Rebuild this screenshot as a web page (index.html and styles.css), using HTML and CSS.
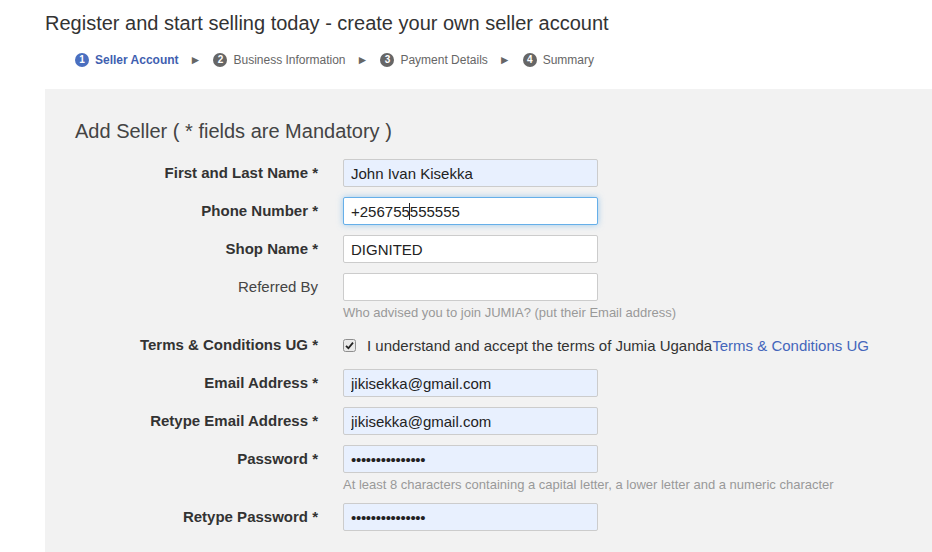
FILE: index.html
```html
<!DOCTYPE html>
<html lang="en">
<head>
    <meta charset="UTF-8">
    <meta name="viewport" content="width=device-width, initial-scale=1.0">
    <title>Register - Seller Account</title>
    <link rel="stylesheet" href="styles.css">
</head>
<body>
    <h1 class="page-title">Register and start selling today - create your own seller account</h1>
    <ul class="steps">
        <li class="step active"><span class="num">1</span>Seller Account</li>
        <li class="arrow">&#9658;</li>
        <li class="step"><span class="num">2</span>Business Information</li>
        <li class="arrow">&#9658;</li>
        <li class="step"><span class="num">3</span>Payment Details</li>
        <li class="arrow">&#9658;</li>
        <li class="step"><span class="num">4</span>Summary</li>
    </ul>

    <div class="panel">
        <h2 class="panel-title">Add Seller ( * fields are Mandatory )</h2>
        <form class="seller-form">
            <div class="form-row">
                <label class="req">First and Last Name *</label>
                <div class="field"><input type="text" class="filled" value="John Ivan Kisekka"></div>
            </div>
            <div class="form-row">
                <label class="req">Phone Number *</label>
                <div class="field caret-wrap">
                    <input type="text" class="focused" value="+256755555555">
                    <span class="caret"></span>
                </div>
            </div>
            <div class="form-row">
                <label class="req">Shop Name *</label>
                <div class="field"><input type="text" value="DIGNITED"></div>
            </div>
            <div class="form-row">
                <label>Referred By</label>
                <div class="field">
                    <input type="text" value="">
                    <p class="help">Who advised you to join JUMIA? (put their Email address)</p>
                </div>
            </div>
            <div class="form-row">
                <label class="req">Terms &amp; Conditions UG *</label>
                <div class="field terms">
                    <svg class="check" width="13" height="13" viewBox="0 0 13 13">
                        <rect x="0.5" y="0.5" width="12" height="12" rx="2" fill="#e9e9e9" stroke="#8f8f8f"/>
                        <path d="M3 6.8 L5.4 9.2 L10 3.6" fill="none" stroke="#222" stroke-width="1.8"/>
                    </svg>
                    <span>I understand and accept the terms of Jumia Uganda<a href="#">Terms &amp; Conditions UG</a></span>
                </div>
            </div>
            <div class="form-row">
                <label class="req">Email Address *</label>
                <div class="field"><input type="text" class="filled" value="jikisekka@gmail.com"></div>
            </div>
            <div class="form-row">
                <label class="req">Retype Email Address *</label>
                <div class="field"><input type="text" class="filled" value="jikisekka@gmail.com"></div>
            </div>
            <div class="form-row">
                <label class="req">Password *</label>
                <div class="field">
                    <input type="password" class="filled" value="aaaaaaaaaaaaaaa">
                    <p class="help">At least 8 characters containing a capital letter, a lower letter and a numeric character</p>
                </div>
            </div>
            <div class="form-row">
                <label class="req">Retype Password *</label>
                <div class="field"><input type="password" class="filled" value="aaaaaaaaaaaaaaa"></div>
            </div>
        </form>
    </div>
</body>
</html>
```

FILE: styles.css
```css
body {
    font-family: "Liberation Sans", Arial, sans-serif;
    background-color: #fff;
    color: #333;
    margin: 0;
    padding: 0 0 0 45px;
}

.page-title {
    font-size: 20px;
    font-weight: normal;
    line-height: 24px;
    color: #333;
    margin: 11px 0 0;
}

.steps {
    list-style: none;
    display: flex;
    align-items: center;
    margin: 15px 0 0 30px;
    padding: 0;
    height: 20px;
    font-size: 12px;
    color: #666;
}

.step {
    display: flex;
    align-items: center;
}

.step.active {
    color: #3f5fb0;
    font-weight: bold;
}

.num {
    display: inline-block;
    width: 14px;
    height: 14px;
    line-height: 14px;
    border-radius: 50%;
    background-color: #666;
    color: #fff;
    font-size: 10px;
    font-weight: bold;
    text-align: center;
    margin-right: 6px;
}

.step.active .num {
    background-color: #4a6fc0;
}

.arrow {
    font-size: 12px;
    color: #666;
    margin: 0 12px 0 11px;
}

.panel {
    background-color: #f2f2f2;
    margin-top: 19px;
    padding: 30px 30px 20px;
    min-height: 440px;
}

.panel-title {
    font-size: 20px;
    font-weight: normal;
    line-height: 24px;
    color: #444;
    margin: 0 0 16px;
}

.form-row {
    display: flex;
    align-items: flex-start;
    margin-bottom: 10px;
}

.form-row label {
    width: 243px;
    flex: none;
    text-align: right;
    font-size: 15px;
    line-height: 28px;
    color: #444;
    margin-right: 25px;
}

.form-row label.req {
    font-weight: bold;
    color: #333;
}

.field input {
    box-sizing: border-box;
    width: 255px;
    height: 28px;
    padding: 0 7px;
    border: 1px solid #ccc;
    border-radius: 2px;
    background-color: #fff;
    font-family: "Liberation Sans", Arial, sans-serif;
    font-size: 15px;
    color: #222;
    outline: none;
}

.field input.filled {
    background-color: #e8f0fe;
}

.field input[type=password] {
    letter-spacing: -0.3px;
    font-size: 15px;
}

.field input.focused {
    border-color: #66afe9;
    box-shadow: 0 0 6px rgba(102, 175, 233, 0.6);
}

.caret-wrap {
    position: relative;
}

.caret {
    position: absolute;
    left: 66px;
    top: 6px;
    width: 1px;
    height: 17px;
    background-color: #222;
}

.help {
    margin: 4px 0 0;
    font-size: 13px;
    line-height: 16px;
    color: #999;
}

.terms {
    display: flex;
    align-items: center;
    height: 28px;
    font-size: 15px;
    color: #333;
}

.check {
    margin-right: 11px;
}

.terms a {
    color: #4466bb;
    text-decoration: none;
}
```
